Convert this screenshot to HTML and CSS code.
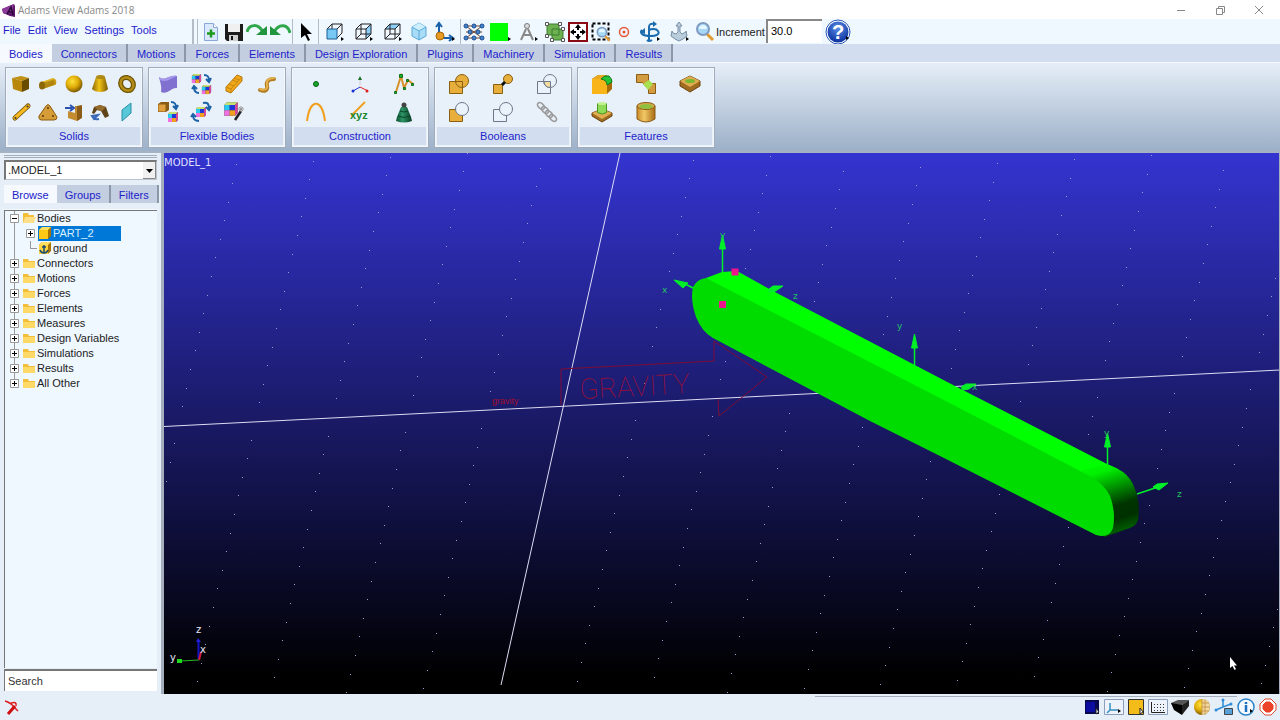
FILE: index.html
```html
<!DOCTYPE html>
<html lang="en">
<head>
    <meta charset="UTF-8">
    <meta name="viewport" content="width=device-width, initial-scale=1.0">
    <title>Adams View Adams 2018</title>
    <link rel="stylesheet" href="styles.css">
</head>

<body>

<!-- shared icon parts -->
<svg class="defs" width="0" height="0" aria-hidden="true">
    <defs>
        <linearGradient id="gold" x1="0" y1="0" x2="1" y2="1">
            <stop offset="0" stop-color="#ffd83a"/><stop offset="1" stop-color="#a87400"/>
        </linearGradient>
        <radialGradient id="ball" cx=".4" cy=".35" r=".7">
            <stop offset="0" stop-color="#ffe23c"/><stop offset=".5" stop-color="#e0ac08"/><stop offset="1" stop-color="#6b4c00"/>
        </radialGradient>
        <linearGradient id="side" x1="0" x2="1">
            <stop offset="0" stop-color="#8a6808"/><stop offset=".45" stop-color="#f2c418"/><stop offset="1" stop-color="#7a5800"/>
        </linearGradient>
        <linearGradient id="tan" x1="0" x2="1">
            <stop offset="0" stop-color="#c98a28"/><stop offset=".4" stop-color="#f2c866"/><stop offset="1" stop-color="#a86c14"/>
        </linearGradient>
        <linearGradient id="green" x1="0" x2="1">
            <stop offset="0" stop-color="#0c5030"/><stop offset=".4" stop-color="#2c9464"/><stop offset="1" stop-color="#083c24"/>
        </linearGradient>
        <radialGradient id="blueball" cx=".5" cy=".3" r=".7">
            <stop offset="0" stop-color="#5b8fe8"/><stop offset="1" stop-color="#0a2f9c"/>
        </radialGradient>
        <symbol id="mesh" viewBox="0 0 12 12">
            <path d="M1 3 3 1h8v8l-2 2H1z" fill="#444"/>
            <path d="M1 3h4v4H1z" fill="#28c8f0"/><path d="M5 3h4v4H5z" fill="#2038d8"/>
            <path d="M1 7h4v4H1z" fill="#f070e0"/><path d="M5 7h4v4H5z" fill="#f0a020"/>
            <path d="M1 3l2-2h8L9 3z" fill="#c8e070"/><path d="M9 3l2-2v8l-2 2z" fill="#d84898"/>
        </symbol>
        <symbol id="menu" viewBox="0 0 4 4"><path d="M0 0v4l3-2z" fill="#000"/></symbol>
        <symbol id="folder" viewBox="0 0 14 14">
            <path d="M1 3h5l1 2h6v7H1z" fill="#f3bf3a"/><path d="M1 6h12v6H1z" fill="#ffd966"/>
        </symbol>
        <symbol id="plus" viewBox="0 0 9 9">
            <path d="M.5.5h8v8h-8z" fill="#fff" stroke="#999"/><path d="M2 4.500h5M4.500 2v5" stroke="#000"/>
        </symbol>
        <symbol id="minus" viewBox="0 0 9 9">
            <path d="M.5.5h8v8h-8z" fill="#fff" stroke="#999"/><path d="M2 4.500h5" stroke="#000"/>
        </symbol>
        <symbol id="lens" viewBox="0 0 22 22">
            <path d="M13 13l6 6" stroke="#e09a30" stroke-width="3"/>
            <circle cx="9" cy="8" r="6" fill="#a8d8f8" stroke="#7f9cc0" stroke-width="2"/>
            <path d="M5 8a4 4 0 0 1 8 0z" fill="#e4f6ff"/>
        </symbol>
    </defs>
</svg>

<div class="window">
    <header class="titlebar">
        <svg class="app-logo" width="16" height="16" viewBox="0 0 16 16">
            <path d="M0 7l12-5 1 2v11l-5-1-7-3z" fill="#5c1468"/><path d="M0 7l12-5-2 9-8 1z" fill="#8d3b98"/>
            <path d="M5 12l4-7 2 8M6 10h4" fill="none" stroke="#280838" stroke-width="1.500"/>
        </svg>
        <h1>Adams View Adams 2018</h1>
        <button aria-label="Minimize"><svg width="12" height="12" viewBox="0 0 12 12"><path d="M2 6.500h8"/></svg></button>
        <button aria-label="Restore"><svg width="12" height="12" viewBox="0 0 12 12"><path d="M2.500 4.500h6v6h-6zM4.500 4V2.500h6v6H9"/></svg></button>
        <button aria-label="Close"><svg width="12" height="12" viewBox="0 0 12 12"><path d="M2 2l8 8M10 2l-8 8"/></svg></button>
    </header>

    <div class="topbar">
        <nav class="menubar">
            <a href="#">File</a>
            <a href="#">Edit</a>
            <a href="#">View</a>
            <a href="#">Settings</a>
            <a href="#">Tools</a>
        </nav>
        <div class="tools">
            <div class="tool-group">
                <button aria-label="New"><svg width="22" height="22" viewBox="0 0 22 22"><path d="M4.500 2.500h9l4 4v13h-13z" fill="#d9e8fc" stroke="#8ba6d8"/><path d="M13.500 2.500v4h4" fill="#fff" stroke="#8ba6d8"/><path d="M7 12.500h8M11 8.500v8" stroke="#1f9a1c" stroke-width="2.500"/></svg></button>
                <button aria-label="Save"><svg width="22" height="22" viewBox="0 0 22 22"><path d="M2 3h3v8h12V3h3v17H4l-2-2z" fill="#1c1c1c"/><path d="M5 3h12v8H5z" fill="#f0f0f0"/><path d="M6 14h9v6H6z" fill="#d0d0d0"/><path d="M8 15h2v4H8z" fill="#111"/></svg></button>
                <button aria-label="Redo"><svg width="22" height="22" viewBox="0 0 22 22"><path d="M1 11C3 3 12 2 17 11" fill="none" stroke="#2fa84c" stroke-width="3"/><path d="M10 14h11V5z" fill="#22963e"/></svg></button>
                <button aria-label="Undo"><svg width="22" height="22" viewBox="0 0 22 22"><path d="M21 12C19 3 10 2 5 11" fill="none" stroke="#2fa84c" stroke-width="3"/><path d="M12 14H1V5z" fill="#22963e"/></svg></button>
            </div>
            <div class="tool-group">
                <button aria-label="Select"><svg width="22" height="22" viewBox="0 0 22 22"><path d="M6 2v15l4-3 3 6 2-1-3-6h5z" fill="#000"/></svg></button>
            </div>
            <div class="tool-group">
                <button class="wide" aria-label="Front view"><svg width="22" height="22" viewBox="0 0 22 22"><path d="M3 8l5-5h10v9l-5 5M13 8l5-5M8 3v5" fill="none" stroke="#222"/><path d="M3 8h10v10H3z" fill="#78c8f4" stroke="#1d5d94"/><use href="#menu" x="17" y="16" width="4" height="4"/></svg></button>
                <button class="wide" aria-label="Right view"><svg width="22" height="22" viewBox="0 0 22 22"><path d="M13 8l5-5v10l-5 5z" fill="#8ccff8"/><path d="M3 8h10v10H3zM3 8l5-5h10v10l-5 5M13 8l5-5M8 3v10h10M8 13l-5 5" fill="none" stroke="#222"/><use href="#menu" x="17" y="16" width="4" height="4"/></svg></button>
                <button class="wide" aria-label="Top view"><svg width="22" height="22" viewBox="0 0 22 22"><path d="M3 8l5-5h10l-5 5z" fill="#8ccff8"/><path d="M3 8h10v10H3zM3 8l5-5h10v10l-5 5M13 8l5-5M8 3v10h10M8 13l-5 5" fill="none" stroke="#222"/><use href="#menu" x="17" y="16" width="4" height="4"/></svg></button>
                <button aria-label="Isometric view"><svg width="22" height="22" viewBox="0 0 22 22"><path d="M11 2l7 4v9l-7 4-7-4V6z" fill="#a9dcf7" stroke="#58a8d8"/><path d="M11 2l7 4-7 4-7-4z" fill="#cdeefc"/><path d="M4 6l7 4 7-4M11 10v9" fill="none" stroke="#58a8d8"/></svg></button>
                <button class="wide" aria-label="View axes"><svg width="22" height="22" viewBox="0 0 22 22"><path d="M5 14V3M2 6l3-4 3 4M8 17h9M15 14l4 3-4 3" fill="none" stroke="#1761a8" stroke-width="2"/><circle cx="6" cy="15" r="4" fill="#e89c24" stroke="#a86408"/><use href="#menu" x="18" y="16" width="4" height="4"/></svg></button>
            </div>
            <div class="tool-group">
                <button aria-label="Working grid"><svg width="22" height="22" viewBox="0 0 22 22"><path d="M3 5l16 12M19 5L3 17M3 5h16M3 17h16M3 11h16" stroke="#7a4a30"/><g fill="#4484cc" stroke="#1c4c90"><circle cx="3" cy="5" r="2"/><circle cx="11" cy="5" r="2"/><circle cx="19" cy="5" r="2"/><circle cx="7" cy="11" r="2"/><circle cx="15" cy="11" r="2"/><circle cx="3" cy="17" r="2"/><circle cx="11" cy="17" r="2"/><circle cx="19" cy="17" r="2"/></g></svg></button>
                <button class="wide" aria-label="Color"><svg width="24" height="22" viewBox="0 0 24 22"><path d="M2 2h18v18H2z" fill="#00ff00"/><use href="#menu" x="20" y="16" width="4" height="4"/></svg></button>
                <button class="wide" aria-label="Measure"><svg width="22" height="22" viewBox="0 0 22 22"><circle cx="9" cy="5" r="2.500" fill="#ddd" stroke="#777"/><path d="M8 8L3 19M10 8l5 11M5 14h8" fill="none" stroke="#888" stroke-width="2"/><use href="#menu" x="17" y="16" width="4" height="4"/></svg></button>
                <button aria-label="Group"><svg width="22" height="22" viewBox="0 0 22 22"><path d="M3 3h12v11H3zM8 8h11v11H8z" fill="#6cb050" stroke="#3c7c2c"/><g fill="#fff" stroke="#555"><path d="M1.500 1.500h3v3h-3zM14.500 1.500h3v3h-3zM1.500 13.500h3v3h-3zM17.500 6.500h3v3h-3zM17.500 17.500h3v3h-3zM6.500 17.500h3v3h-3z"/></g></svg></button>
                <button aria-label="Fit view"><svg width="22" height="22" viewBox="0 0 22 22"><path d="M2 2h18v18H2z" fill="#fff" stroke="#8c0c14" stroke-width="2"/><path d="M11 3l3 4h-2v2h-2V7H8zM11 19l3-4h-2v-2h-2v2H8zM3 11l4-3v2h2v2H7v2zM19 11l-4-3v2h-2v2h2v2z" fill="#000"/></svg></button>
                <button aria-label="Zoom box"><svg width="22" height="22" viewBox="0 0 22 22"><path d="M2.500 2.500h16v16h-16z" fill="none" stroke="#000" stroke-width="2" stroke-dasharray="3 2"/><use href="#lens" x="5" y="5" width="17" height="17"/></svg></button>
                <button aria-label="Center"><svg width="22" height="22" viewBox="0 0 22 22"><circle cx="11" cy="11" r="4.500" fill="none" stroke="#e8543c" stroke-width="1.500"/><circle cx="11" cy="11" r="1.500" fill="#e8543c"/></svg></button>
                <button class="wide" aria-label="Rotate"><svg width="22" height="22" viewBox="0 0 22 22"><path d="M10 20V6q0-4 5-3M3 9c-3 3 1 6 8 6s10-2 8-5-7-2-9-1M8 19q2 2 5 0" fill="none" stroke="#1b6cae" stroke-width="2"/><path d="M14 0l4 3-4 3zM1 11l5-4v6z" fill="#1b6cae"/><use href="#menu" x="18" y="16" width="4" height="4"/></svg></button>
                <button class="wide" aria-label="Translate"><svg width="22" height="22" viewBox="0 0 22 22"><path d="M11 1l3 4h-2v6l2 2 4-2v-1l1 5-4 3-4 2-4-2-4-3 1-5 1 2 3 1 2-2V5H8z" fill="#b9cddd" stroke="#7890a4"/><use href="#menu" x="18" y="16" width="4" height="4"/></svg></button>
                <button aria-label="Zoom"><svg width="22" height="22"><use href="#lens" width="22" height="22"/></svg></button>
                <label for="increment">Increment</label>
                <input id="increment" type="text" value="30.0">
                <button class="help" aria-label="Help"><svg width="26" height="26" viewBox="0 0 26 26"><circle cx="13" cy="13" r="12" fill="#fff" stroke="#2858b8"/><circle cx="13" cy="13" r="10.500" fill="url(#blueball)"/><text class="qmark" x="13" y="20" text-anchor="middle">?</text><use href="#menu" x="21" y="17" width="4" height="4"/></svg></button>
            </div>
        </div>
    </div>

    <nav class="tabs">
        <button class="active">Bodies</button>
        <button>Connectors</button>
        <button>Motions</button>
        <button>Forces</button>
        <button>Elements</button>
        <button>Design Exploration</button>
        <button>Plugins</button>
        <button>Machinery</button>
        <button>Simulation</button>
        <button>Results</button>
    </nav>

    <div class="ribbon">
        <section class="panel">
            <div class="icons five">
                <button aria-label="Box"><svg width="22" height="22" viewBox="0 0 22 22"><path d="M2 5l9-2 8 2-7 3z" fill="#c09010"/><path d="M2 5l10 3v11L3 16z" fill="#b8860b"/><path d="M12 8l7-3v11l-7 3z" fill="#6a4c00"/></svg></button>
                <button aria-label="Cylinder"><svg width="22" height="22" viewBox="0 0 22 22"><path d="M4 9l12-4c4 1 4 5 2 7L6 16z" fill="url(#gold)"/><path d="M4 10l13-3v4L6 16z" fill="#8f6a06" opacity=".5"/><ellipse cx="5" cy="12.500" rx="3" ry="4" fill="#8b6706"/></svg></button>
                <button aria-label="Sphere"><svg width="22" height="22" viewBox="0 0 22 22"><circle cx="11" cy="11" r="8.500" fill="url(#ball)"/></svg></button>
                <button aria-label="Frustum"><svg width="22" height="22" viewBox="0 0 22 22"><path d="M7 4h9l3 12c-2 4-13 4-16 0z" fill="url(#side)"/><ellipse cx="11.500" cy="4" rx="4.500" ry="2" fill="#b08a18"/></svg></button>
                <button aria-label="Torus"><svg width="22" height="22" viewBox="0 0 22 22"><ellipse cx="11" cy="11" rx="6" ry="7" transform="rotate(-40 11 11)" fill="none" stroke="#6d5400" stroke-width="5"/><ellipse cx="11" cy="11" rx="6" ry="7" transform="rotate(-40 11 11)" fill="none" stroke="#b48c18" stroke-width="2.500"/></svg></button>
                <button aria-label="Link"><svg width="22" height="22" viewBox="0 0 22 22"><path d="M5 17L18 5" stroke="#6b4a00" stroke-width="5" stroke-linecap="round"/><path d="M5 17L18 5" stroke="#f5b820" stroke-width="3.500" stroke-linecap="round"/><circle cx="5.500" cy="17" r="1" fill="#333"/><circle cx="17.500" cy="5.500" r="1" fill="#333"/></svg></button>
                <button aria-label="Plate"><svg width="22" height="22" viewBox="0 0 22 22"><path d="M9 5q2-3 4 0l7 11q0 3-3 3H4q-3-1-2-4z" fill="#d69c38" stroke="#8a5c10"/><g fill="#5a3c08"><circle cx="11" cy="7" r="1"/><circle cx="6" cy="15" r="1"/><circle cx="16" cy="15" r="1"/></g></svg></button>
                <button aria-label="Extrusion"><svg width="22" height="22" viewBox="0 0 22 22"><path d="M5 10l7 2V5h5v13l-3 2-9-3z" fill="#c48c30"/><path d="M14 5l5-1v13l-5 3z" fill="#8a5c18"/><path d="M2 7h7M7 4l4 3-4 3" fill="none" stroke="#2a50b0" stroke-width="2"/></svg></button>
                <button aria-label="Revolution"><svg width="22" height="22" viewBox="0 0 22 22"><path d="M3 12l2-6 6-2 6 2 3 9-4 2-4-7-4-1-3 4z" fill="#5e4218"/><path d="M5 6l6-2 6 2-4 4-4-1z" fill="#946c2c"/><path d="M10 18q-5 1-6-2M3 15l6-1-4 4z" fill="none" stroke="#3868b8" stroke-width="2"/></svg></button>
                <button aria-label="Plane"><svg width="22" height="22" viewBox="0 0 22 22"><path d="M6 9l9-7v10l-9 8z" fill="#58c8d8" stroke="#2890a8"/></svg></button>
            </div>
            <h2>Solids</h2>
        </section>
        <section class="panel">
            <div class="icons four">
                <button aria-label="Flexible body"><svg width="22" height="22" viewBox="0 0 22 22"><path d="M2 4c6 5 10-3 18-1v12c-6-1-9 7-16 4 1-6-1-10-2-15z" fill="#8070d0"/><path d="M2 4c6 5 10-3 18-1-5 2-11 7-17 4z" fill="#a598ec"/></svg></button>
                <button aria-label="Flex to flex"><svg width="22" height="22" viewBox="0 0 22 22"><use href="#mesh" x="1" y="0" width="11" height="11"/><use href="#mesh" x="11" y="11" width="11" height="11"/><path d="M14 2c4 0 5 2 5 6M16 6l3 3 2-4M9 20c-4 0-5-2-5-6M2 16l2-3 3 3" fill="none" stroke="#1b62a8" stroke-width="2"/></svg></button>
                <button aria-label="Beam"><svg width="22" height="22" viewBox="0 0 22 22"><path d="M3 14L14 2l5 2v4L8 20l-5-2z" fill="#f0a818" stroke="#b87808"/><path d="M3 14l5 2L19 4M8 16v4M6 11l5 2M9 7l6 2M11 5l5 2" fill="none" stroke="#c88810"/></svg></button>
                <button aria-label="Flexible link"><svg width="22" height="22" viewBox="0 0 22 22"><path d="M4 17c5 2 8 0 7-4s1-7 7-7" fill="none" stroke="#b07c20" stroke-width="4" stroke-linecap="round"/><path d="M4 16c5 2 8 0 7-4s1-7 7-7" fill="none" stroke="#e4b04c" stroke-width="2" stroke-linecap="round"/></svg></button>
                <button aria-label="Rigid to flex"><svg width="22" height="22" viewBox="0 0 22 22"><path d="M1 3l3-2h8v8l-3 2H1z" fill="#8a5c14"/><path d="M1.500 3.500h7v7h-7z" fill="#e0a040"/><use href="#mesh" x="10" y="10" width="12" height="12"/><path d="M14 1c4 0 5 2 5 6M16 5l3 3 2-4" fill="none" stroke="#1b62a8" stroke-width="2"/></svg></button>
                <button aria-label="Swap mesh"><svg width="22" height="22" viewBox="0 0 22 22"><use href="#mesh" x="5" y="5" width="12" height="12"/><path d="M13 2c5-1 6 1 6 6M16 6l3 3 2-4M9 20c-5 0-6-2-6-6M1 16l2-3 3 3" fill="none" stroke="#1b62a8" stroke-width="2"/></svg></button>
                <button aria-label="Mesh wizard"><svg width="22" height="22" viewBox="0 0 22 22"><use href="#mesh" x="0" y="0" width="16" height="16"/><path d="M12 19l6-9" stroke="#222" stroke-width="2.500"/><path d="M18 5v6M15 8h6M16 6l4 4M20 6l-4 4" stroke="#999"/></svg></button>
            </div>
            <h2>Flexible Bodies</h2>
        </section>
        <section class="panel">
            <div class="icons three">
                <button aria-label="Point"><svg width="22" height="22" viewBox="0 0 22 22"><circle cx="11" cy="11" r="2.500" fill="#14a828" stroke="#086010"/></svg></button>
                <button aria-label="Marker"><svg width="22" height="22" viewBox="0 0 22 22"><path d="M11 12V5" stroke="#ccc"/><path d="M11 3l2 4H9z" fill="#187028"/><path d="M11 14l-7 4" stroke="#1830d8"/><path d="M11 14l8 4" stroke="#e02020"/><circle cx="4" cy="18" r="1.500" fill="#1830d8"/><circle cx="18" cy="18" r="1.500" fill="#e02020"/></svg></button>
                <button aria-label="Polyline"><svg width="22" height="22" viewBox="0 0 22 22"><path d="M3 19L8 3l3 12 4-8 5 4" fill="none" stroke="#d89028" stroke-width="2"/><g fill="#20b030" stroke="#107018"><path d="M1.500 18.500h2v2h-2zM6.500 1.500h3v3h-3zM10.500 14.500h2v2h-2zM13.500 6.500h2v2h-2zM18.500 10.500h2v2h-2z"/></g></svg></button>
                <button aria-label="Arc"><svg width="22" height="22" viewBox="0 0 22 22"><path d="M2 20C5-3 17-3 20 20" fill="none" stroke="#f0a020" stroke-width="2"/></svg></button>
                <button aria-label="Orientation"><svg width="22" height="22" viewBox="0 0 22 22"><path d="M2 15L16 1" stroke="#f0a020" stroke-width="2"/><text class="xyz" x="1" y="18">xyz</text></svg></button>
                <button aria-label="Point mass"><svg width="22" height="22" viewBox="0 0 22 22"><path d="M8 6h6l4 10 1 4q-8 3-16 0l1-4z" fill="url(#green)"/><path d="M5 15q6 3 12 0M7 10q4 2 8 0" fill="none" stroke="#0c4428"/><circle cx="11" cy="4" r="2.500" fill="#444"/></svg></button>
            </div>
            <h2>Construction</h2>
        </section>
        <section class="panel">
            <div class="icons three">
                <button aria-label="Unite"><svg width="22" height="22" viewBox="0 0 22 22"><path d="M1.500 8.500h13v12h-13z" fill="#e8ae3c" stroke="#8a6010"/><circle cx="14" cy="8" r="6.500" fill="#e8ae3c" stroke="#8a6010"/><path d="M8 8.500h6.500V14" fill="none" stroke="#8a6010"/></svg></button>
                <button aria-label="Merge"><svg width="22" height="22" viewBox="0 0 22 22"><path d="M1.500 11.500h9v9h-9z" fill="#e8ae3c" stroke="#8a6010"/><circle cx="16" cy="6" r="4.500" fill="#e8ae3c" stroke="#8a6010"/><path d="M10 12l3-3" stroke="#111" stroke-width="3"/></svg></button>
                <button aria-label="Intersect"><svg width="22" height="22" viewBox="0 0 22 22"><path d="M1.500 8.500h13v12h-13z" fill="#eaf3fc" stroke="#6c7888"/><circle cx="14" cy="8" r="6.500" fill="#eaf3fc" stroke="#6c7888"/><path d="M8 8.500h6.500v6q-6 0-6.500-6z" fill="#f4dca0" stroke="#6c7888"/></svg></button>
                <button aria-label="Cut"><svg width="22" height="22" viewBox="0 0 22 22"><path d="M1.500 8.500h13v12h-13z" fill="#e8ae3c" stroke="#8a6010"/><circle cx="14" cy="8" r="6.500" fill="#eaf3fc" stroke="#6c7888"/></svg></button>
                <button aria-label="Split"><svg width="22" height="22" viewBox="0 0 22 22"><path d="M1.500 8.500h13v12h-13z" fill="#eaf3fc" stroke="#6c7888"/><circle cx="14" cy="8" r="6.500" fill="#eaf3fc" stroke="#6c7888"/></svg></button>
                <button aria-label="Chain"><svg width="22" height="22" viewBox="0 0 22 22"><g fill="none" stroke="#999" stroke-width="1.500"><ellipse cx="5" cy="5" rx="4" ry="2.500" transform="rotate(42 5 5)"/><ellipse cx="9" cy="9" rx="4" ry="2.500" transform="rotate(42 9 9)"/><ellipse cx="13" cy="13" rx="4" ry="2.500" transform="rotate(42 13 13)"/><ellipse cx="17" cy="17" rx="4" ry="2.500" transform="rotate(42 17 17)"/></g></svg></button>
            </div>
            <h2>Booleans</h2>
        </section>
        <section class="panel">
            <div class="icons three">
                <button aria-label="Fillet"><svg width="22" height="22" viewBox="0 0 22 22"><path d="M1 6l6-4h8l6 5v9l-5 5H1z" fill="#a86c08"/><path d="M1 6h9q6 1 6 6v9H1z" fill="#f8b418"/><path d="M1 6l6-4h8l-5 4z" fill="#e8a820"/><path d="M10 6q3-4 8-3 3 3 3 6l-5 3q0-5-6-6z" fill="#28c438" stroke="#107820"/></svg></button>
                <button aria-label="Chamfer"><svg width="22" height="22" viewBox="0 0 22 22"><path d="M1.500 1.500h12v6l3 3h4v10h-7v-4l-6-7h-6z" fill="#d49c40" stroke="#8a5c14"/><path d="M8 11l6-4 4 4-5 6z" fill="#a8e050"/></svg></button>
                <button aria-label="Hole"><svg width="22" height="22" viewBox="0 0 22 22"><path d="M1 8l10-5 10 5v5l-10 6-10-6z" fill="#a06c20" stroke="#6c4410"/><path d="M1 8l10-5 10 5-10 6z" fill="#e0ac50"/><ellipse cx="11" cy="8" rx="5" ry="2" fill="#78b830"/></svg></button>
                <button aria-label="Boss"><svg width="22" height="22" viewBox="0 0 22 22"><path d="M1 12l10-4 10 4v3l-10 6-10-6z" fill="#a06c20" stroke="#6c4410"/><path d="M1 12l10-4 10 4-10 6z" fill="#e0ac50"/><path d="M6.500 2.500h9v9q-4 3-9 0z" fill="#8fdc58" stroke="#4c9420"/><ellipse cx="11" cy="2.500" rx="4.500" ry="1.500" fill="#c0f090"/></svg></button>
                <button aria-label="Hollow"><svg width="22" height="22" viewBox="0 0 22 22"><path d="M2 5v13q9 6 18 0V5z" fill="url(#tan)" stroke="#8a5c14"/><ellipse cx="11" cy="5" rx="9" ry="3.500" fill="#d8a848" stroke="#8a5c14"/><ellipse cx="11" cy="5.500" rx="6.500" ry="2.500" fill="#90c040"/></svg></button>
            </div>
            <h2>Features</h2>
        </section>
    </div>

    <main class="workspace">
        <aside class="sidebar">
            <div class="grip"></div>
            <div class="model">
                <select aria-label="Model"><option>.MODEL_1</option></select>
                <svg width="13" height="17" viewBox="0 0 13 17"><path d="M0 0h13v17H0z" fill="#f0f0f0"/><path d="M12.500 0v16.500H0" fill="none" stroke="#888"/><path d="M3 7h7l-3.500 4z"/></svg>
            </div>
            <nav class="side-tabs">
                <button class="active">Browse</button>
                <button>Groups</button>
                <button>Filters</button>
            </nav>
            <ul class="tree">
                <li><svg width="9" height="9"><use href="#minus"/></svg><svg width="14" height="14" viewBox="0 0 14 14"><path d="M1 2h5l1 2h5v8H1z" fill="#f3bf3a"/><path d="M3 6h11l-2 6H1z" fill="#ffe08a"/></svg>Bodies
                    <ul>
                        <li><svg width="9" height="9"><use href="#plus"/></svg><span class="selected"><svg width="14" height="14" viewBox="0 0 14 14"><path d="M1 4l3-3h9v9l-3 3H1z" fill="#a87400"/><path d="M1 4h9v9H1z" fill="#ffc814"/><path d="M1 4l3-3h9l-3 3z" fill="#ffe060"/></svg>PART_2</span></li>
                        <li class="leaf"><span><svg width="14" height="14" viewBox="0 0 14 14"><path d="M1 4l3-3h9v9l-3 3H1z" fill="#a87400"/><path d="M1 4h9v9H1z" fill="#ffd43c"/><path d="M1 4l3-3h9l-3 3z" fill="#ffe060"/><path d="M6 4v8M4 6h4M2 9q1 3 4 3t4-3" fill="none" stroke="#1c4c74" stroke-width="1.500"/></svg>ground</span></li>
                    </ul>
                </li>
                <li><svg width="9" height="9"><use href="#plus"/></svg><svg width="14" height="14"><use href="#folder"/></svg>Connectors</li>
                <li><svg width="9" height="9"><use href="#plus"/></svg><svg width="14" height="14"><use href="#folder"/></svg>Motions</li>
                <li><svg width="9" height="9"><use href="#plus"/></svg><svg width="14" height="14"><use href="#folder"/></svg>Forces</li>
                <li><svg width="9" height="9"><use href="#plus"/></svg><svg width="14" height="14"><use href="#folder"/></svg>Elements</li>
                <li><svg width="9" height="9"><use href="#plus"/></svg><svg width="14" height="14"><use href="#folder"/></svg>Measures</li>
                <li><svg width="9" height="9"><use href="#plus"/></svg><svg width="14" height="14"><use href="#folder"/></svg>Design Variables</li>
                <li><svg width="9" height="9"><use href="#plus"/></svg><svg width="14" height="14"><use href="#folder"/></svg>Simulations</li>
                <li><svg width="9" height="9"><use href="#plus"/></svg><svg width="14" height="14"><use href="#folder"/></svg>Results</li>
                <li><svg width="9" height="9"><use href="#plus"/></svg><svg width="14" height="14"><use href="#folder"/></svg>All Other</li>
            </ul>
            <input class="search" type="text" value="Search" aria-label="Search">
        </aside>

        <svg class="scene" viewBox="164 153 1115 541" preserveAspectRatio="xMidYMid slice">
            <defs>
                <linearGradient id="cap" x1="0" y1="0" x2=".25" y2="1">
                    <stop offset="0" stop-color="#00ff00"/><stop offset=".18" stop-color="#00f000"/>
                    <stop offset=".45" stop-color="#008a00"/><stop offset=".68" stop-color="#003400"/>
                    <stop offset=".85" stop-color="#003000"/><stop offset="1" stop-color="#005800"/>
                </linearGradient>
            </defs>
            <g id="dots" fill="#9c9cd0"></g>
            <!-- working grid axes -->
            <path d="M164 426.500L1280 370M620 153L501 685" stroke="#dcdcf4" fill="none"/>

            <!-- gravity -->
            <path d="M561 405V369L714 361V341L767 377L719 416L718 399" stroke="#7c0c34" fill="none"/>
            <text class="gravity" x="580" y="399" transform="rotate(-3 580 399)">GRAVITY</text>
            <text class="gravity-name" x="492" y="404">gravity</text>

            <!-- link -->
            <path d="M706 278L722 272L737 271L773 291L955 386L1107 464L1118 469L1124 530L1095 490L940 420L720 320z" fill="#00ff00"/>
            <path d="M1082 470L1107 464L1118 469Q1128 474 1133 484Q1141 502 1138 520Q1136 526 1130 528L1104 537z" fill="url(#cap)"/>
            <path d="M706 278L940 398L1086 474Q1104 483 1110 496Q1116 512 1113 528Q1109 539 1096 535L940 456L870 421L713 338Q702 332 696 317Q690 300 693 287Q697 279 706 278z" fill="#00dc00"/>

            <!-- markers -->
            <g stroke="#00f028" fill="#00f028">
                <path d="M722.500 272V244M693 288L685 284M914.500 366V346M1107.500 464V446M1137 494L1158 487" stroke-width="1.500"/>
                <path d="M722.500 235l3 14h-6zM674 280l14 3-5 5zM769 289l4-3 10 0-9 6-6 0zM914.500 334l3 14h-6zM961 387l5-3 10 0-7 5-6 1zM1107.500 433l3 14h-6zM1153 487l4-3 11-1-9 7z"/>
            </g>
            <path d="M731.500 268.500h7v7h-7zM719 301h7v7h-7z" fill="#f0148c"/>
            <g class="axis-names">
                <text x="662" y="293">x</text>
                <text x="720" y="238">y</text>
                <text x="793" y="299">z</text>
                <text x="897" y="329">y</text>
                <text x="972" y="390">x</text>
                <text x="1104" y="436">y</text>
                <text x="1177" y="497">z</text>
            </g>

            <!-- view triad -->
            <path d="M199 660L180 661" stroke="#20b820"/><path d="M177 659h5v4h-5z" fill="#20d820"/>
            <path d="M198.500 659V640" stroke="#1414c8" stroke-width="2"/><path d="M198 638l-2 4h5z" fill="#2020d8"/>
            <path d="M199 660l2-8" stroke="#d01c3c" stroke-width="2"/>
            <g class="triad">
                <text x="196" y="633">z</text>
                <text x="200" y="653">x</text>
                <text x="170" y="661">y</text>
            </g>
            <text class="model-name" x="164" y="166">MODEL_1</text>
            <path d="M1230 657v11l2.500-2 2 4 1.500-1-2-3.500h3z" fill="#fff"/>
        </svg>
    </main>

    <footer class="status">
        <button class="stop" aria-label="Tool"><svg width="18" height="18" viewBox="0 0 18 18"><path d="M2 3q6 2 8 5l5 5M8 5q6-2 5 3" fill="none" stroke="#e02020" stroke-width="1.500"/><path d="M5 16l7-8" stroke="#d01010" stroke-width="3"/></svg></button>
        <button aria-label="Background"><svg width="20" height="18" viewBox="0 0 20 18"><path d="M3 2h14v14H3z" fill="#080850"/><path d="M4 4h9v10H4z" fill="#0c0ca0"/><path d="M14 10v6l3-2z" fill="#eee" stroke="#222"/></svg></button>
        <button aria-label="Triad"><svg width="20" height="18" viewBox="0 0 20 18"><path d="M.5 1.500h19v15H.5z" fill="#eef3fb" stroke="#8c9cbc"/><path d="M6 5v7l8 0M6 12l-3 3" fill="none" stroke="#3890c0" stroke-width="1.500"/><use href="#menu" x="14" y="11" width="4" height="4"/></svg></button>
        <button aria-label="Render"><svg width="20" height="18" viewBox="0 0 20 18"><path d="M2.500 1.500h15v15h-15z" fill="#f4bc18" stroke="#333"/><path d="M14 10v6l3-2z" fill="#fff" stroke="#222"/></svg></button>
        <button aria-label="Grid"><svg width="20" height="18" viewBox="0 0 20 18"><path d="M.5 1.500h19v15H.5z" fill="#eef3fb" stroke="#8c9cbc"/><path d="M3.500 4v10.500H17" fill="none" stroke="#222"/><path d="M6 6.500h11M6 9.500h11M6 12.500h11" stroke="#333" stroke-dasharray="1 2"/></svg></button>
        <button aria-label="Projection"><svg width="20" height="18" viewBox="0 0 20 18"><path d="M1 5l7-3h11l-7 5H2z" fill="#555"/><path d="M1 5l11 2v10L4 12z" fill="#000"/><path d="M12 7l7-5v6l-7 9z" fill="#222"/></svg></button>
        <button aria-label="Shading"><svg width="20" height="18" viewBox="0 0 20 18"><circle cx="10" cy="9" r="8" fill="url(#ball)"/><path d="M10 1a8 8 0 0 1 0 16z" fill="#f0d8a0"/><path d="M10 5h7M10 9h8M10 13h7M13 2v14M10 1v16" stroke="#c89850" fill="none"/></svg></button>
        <button aria-label="Icons"><svg width="20" height="18" viewBox="0 0 20 18"><path d="M9 2v7l8-3M9 9l-7 3" fill="none" stroke="#2c8cd8" stroke-width="1.500"/><g fill="#2c8cd8"><circle cx="9" cy="2" r="1.500"/><circle cx="2" cy="12" r="1.500"/><circle cx="17" cy="6" r="1.500"/></g><path d="M10.500 10.500h8v6h-8z" fill="#58a0d8" stroke="#444"/></svg></button>
        <button aria-label="Information"><svg width="20" height="18" viewBox="0 0 20 18"><circle cx="10" cy="9" r="8" fill="#f4faff" stroke="#2c84c8" stroke-width="1.500"/><path d="M10 7v7M10 4v2" stroke="#1c70c0" stroke-width="2.500"/><use href="#menu" x="14" y="11" width="4" height="4"/></svg></button>
        <button aria-label="Stop"><svg width="20" height="18" viewBox="0 0 20 18"><path d="M7 1h6l5 5v6l-5 5H7l-5-5V6z" fill="#fff" stroke="#e04830"/><path d="M8 4h4l3 3v4l-3 3H8l-3-3V7z" fill="#ec4428" stroke="#ec4428"/></svg></button>
    </footer>
</div>

<script>
// working grid points, skewed by the camera
const dots = document.getElementById("dots");
for (let i = -6; i <= 11; i++) {
    for (let j = -18; j <= 18; j++) {
        if (i === 0 || j === 0) continue;
        let dot = document.createElementNS("http://www.w3.org/2000/svg", "rect");
        dot.setAttribute("x", Math.round(562.5 + 76.9 * i - 4.16 * j));
        dot.setAttribute("y", Math.round(405.5 - 3.86 * i + 18.6 * j));
        dot.setAttribute("width", 1);
        dot.setAttribute("height", 1);
        dots.appendChild(dot);
    }
}
</script>
</body>
</html>
```
FILE: styles.css
```css
* {
    box-sizing: border-box;
}

body {
    margin: 0;
    font-family: "Liberation Sans", Arial, sans-serif;
    font-size: 11px;
    color: #222;
}

button {
    font: inherit;
    border: none;
    background: none;
    padding: 0;
    cursor: pointer;
}

svg {
    display: block;
    flex: none;
}

.defs {
    position: absolute;
}

.window {
    display: flex;
    flex-direction: column;
    height: 100vh;
    background: #e6eef8;
}

/* title bar */
.titlebar {
    display: flex;
    align-items: center;
    height: 19px;
    padding: 0 2px;
    background: #fff;
}

.titlebar h1 {
    flex: 1;
    margin: 0;
    font: 10px "Open Sans", sans-serif;
    color: #888;
}

.titlebar button {
    display: flex;
    justify-content: center;
    width: 39px;
}

.titlebar button svg {
    fill: none;
    stroke: #888;
}

/* menu and toolbar */
.topbar {
    display: flex;
    height: 25px;
    background: #eff7ff;
}

.menubar {
    display: flex;
    gap: 7px;
    width: 190px;
    padding: 5px 3px;
}

.menubar a {
    color: #2222cc;
    text-decoration: none;
}

.tools {
    display: flex;
    border-left: 2px solid #b4bcc8;
    margin-left: 2px;
    padding-left: 3px;
}

.tool-group {
    display: flex;
    align-items: center;
    border-left: 1px solid #b4bcc8;
    padding: 0 1px;
}

.tool-group button {
    display: flex;
    justify-content: center;
    width: 23px;
}

.tool-group .wide {
    width: 29px;
}

.tool-group label {
    width: 50px;
}

.tool-group input {
    align-self: flex-start;
    width: 56px;
    height: 24px;
    border: 0;
    border-top: 2px solid #888;
    border-left: 2px solid #888;
    padding: 0 3px 2px;
    font: inherit;
    background: #fff;
}

.tool-group .help {
    width: 32px;
}

.qmark {
    font-size: 20px;
    font-weight: bold;
    fill: #fff;
}

/* ribbon tabs */
.tabs {
    display: flex;
    height: 19px;
    background: #d2deef;
    border-bottom: 1px solid #f4f8ff;
}

.tabs button {
    padding: 2px 9px 0;
    color: #2222cc;
    background: #c3cfe0;
    border-right: 2px solid #8c98a8;
    line-height: 16px;
}

.tabs .active,
.side-tabs .active {
    background: #f6faff;
    border-right: 0;
}

/* ribbon */
.ribbon {
    display: flex;
    gap: 5px;
    height: 90px;
    padding: 4px 5px 3px;
    background: linear-gradient(#e6eef8, #9cb0c8);
    border-bottom: 2px solid #a4b2c4;
}

.panel {
    display: flex;
    flex-direction: column;
    width: 138px;
    padding: 2px;
    background: #e8f0f9;
    border: 1px solid #a0acbc;
    outline: 1px solid #f4f8fc;
    outline-offset: -2px;
}

.icons {
    display: grid;
    grid-auto-rows: 28px;
    flex: 1;
}

.icons button {
    display: flex;
    align-items: center;
    justify-content: center;
}

.five {
    grid-template-columns: repeat(5, 1fr);
}

.four {
    grid-template-columns: repeat(4, 1fr);
}

.three {
    grid-template-columns: repeat(3, 1fr);
}

.panel h2 {
    margin: 0;
    font-size: 11px;
    font-weight: normal;
    line-height: 18px;
    text-align: center;
    color: #2222cc;
    background: #d2deef;
}

.xyz {
    font-size: 11px;
    font-weight: bold;
    fill: #18882c;
}

/* sidebar */
.workspace {
    display: flex;
    flex: 1;
    min-height: 0;
}

.sidebar {
    display: flex;
    flex-direction: column;
    width: 164px;
    padding: 2px 4px 3px;
    border-right: 3px solid #a4aebc;
}

.grip {
    height: 3px;
    margin-bottom: 2px;
    border-top: 1px solid #a4aebc;
    border-bottom: 1px solid #a4aebc;
}

.model {
    position: relative;
    height: 20px;
    margin-bottom: 5px;
}

.model select {
    appearance: none;
    width: 100%;
    height: 20px;
    border: 1px solid #bcc4cc;
    border-top: 2px solid #777;
    border-left: 2px solid #777;
    border-radius: 0;
    padding: 0 2px 2px;
    font: inherit;
    color: #222;
    background: #fff;
}

.model svg {
    position: absolute;
    top: 2px;
    right: 1px;
    pointer-events: none;
}

.side-tabs {
    display: flex;
    height: 25px;
    padding-bottom: 6px;
    border-bottom: 1px solid #f4f8ff;
}

.side-tabs button {
    padding: 2px 8px 0;
    color: #2222cc;
    background: #c3cfe0;
    border-right: 2px solid #8c98a8;
}

.tree {
    flex: 1;
    margin: 0;
    padding: 0 0 0 5px;
    list-style: none;
    line-height: 15px;
    background: #eff7ff;
    border-top: 1px solid #777;
    border-left: 1px solid #777;
}

.tree li svg {
    display: inline-block;
    vertical-align: middle;
    margin: -4px 3px -2px 0;
}

.tree li svg + svg {
    margin-right: 1px;
}

.tree > li {
    background: linear-gradient(#999, #999) 4px 0 / 1px 100% no-repeat;
}

.tree > li:last-child {
    background-size: 1px 8px;
}

.tree ul {
    margin: 0;
    padding: 0 0 0 16px;
    list-style: none;
}

.tree span {
    display: inline-block;
    height: 15px;
    vertical-align: top;
}

.tree li span svg {
    margin-right: 1px;
}

.tree .selected {
    width: 83px;
    color: #d8f0ff;
    background: #0078d7;
}

.tree .leaf {
    padding-left: 12px;
    background: linear-gradient(#999, #999) 4px 0 / 1px 8px no-repeat, linear-gradient(#999, #999) 4px 7px / 7px 1px no-repeat;
}

.search {
    height: 22px;
    margin-top: 1px;
    border: 0;
    border-top: 2px solid #777;
    border-left: 1px solid #777;
    padding: 0 3px;
    font: inherit;
    color: #333;
    background: #fff;
}

/* 3D view */
.scene {
    flex: 1;
    min-width: 0;
    height: 100%;
    background: linear-gradient(#3434d0, #000 97%);
    border-right: 1px solid #a4aebc;
}

.gravity {
    font: 100 28px Roboto, sans-serif;
    fill: #a00c34;
}

.gravity-name {
    font-size: 9px;
    fill: #a01030;
}

.axis-names {
    font: 9px "DejaVu Sans", sans-serif;
    fill: #20c060;
}

.triad {
    font: 10px "DejaVu Sans", sans-serif;
    fill: #e8e8f8;
}

.model-name {
    font: 10px "DejaVu Sans", sans-serif;
    fill: #e0e0ff;
}

/* status bar */
.status {
    display: flex;
    align-items: center;
    gap: 2px;
    height: 26px;
    padding: 0 2px 0 3px;
    background: linear-gradient(#a4aebc, #a4aebc) 95% 2px / 33% 1px no-repeat, #e6eef8;
}

.status .stop {
    margin-right: auto;
}
```
